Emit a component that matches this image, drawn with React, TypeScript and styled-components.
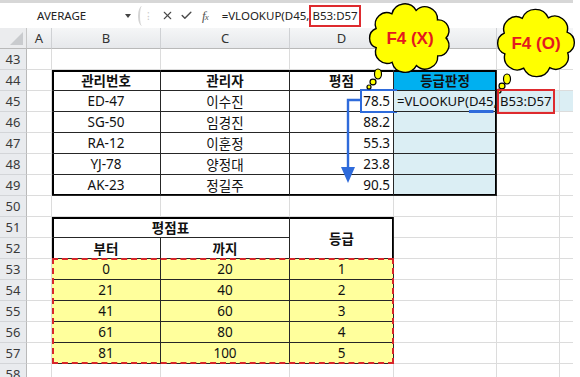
import React from 'react';
import styled, { createGlobalStyle } from 'styled-components';
import { X, Check } from 'lucide-react';

const GlobalStyle = createGlobalStyle`
  html, body {
    margin: 0;
    padding: 0;
    background: #fff;
  }
  body {
    font-family: "Noto Sans", "Noto Sans CJK KR", sans-serif;
    color: #111;
  }
`;

const COLS = '27px 25px 109px 129px 104px 103px 63px 13px';
const ROW_H = '21px';

const Page = styled.div`
  position: relative;
  width: 580px;
  height: 377px;
  overflow: hidden;
`;

const Window = styled.div`
  width: 573px;
`;

const FormulaBar = styled.div`
  display: flex;
  align-items: center;
  height: 28px;
  box-sizing: border-box;
  border-top: 3px solid #d7d7d7;
  background: #fff;
`;

const NameBox = styled.div`
  display: flex;
  align-items: center;
  justify-content: space-between;
  width: 136px;
  padding: 0 5px 0 37px;
  box-sizing: border-box;
  font-size: 11.5px;
  color: #222;
`;

const DropArrow = styled.span`
  width: 0;
  height: 0;
  border-left: 3px solid transparent;
  border-right: 3px solid transparent;
  border-top: 4px solid #444;
`;

const Bracket = styled.span`
  width: 6px;
  height: 20px;
  margin-left: 2px;
  border-left: 2px solid #d4d4d4;
  border-radius: 50% 0 0 50%;
`;

const Grip = styled.span`
  color: #c8c8c8;
  font-size: 10px;
  margin-left: 1px;
  width: 14px;
`;

const ToolIcons = styled.div`
  display: flex;
  align-items: center;
  gap: 6px;
  color: #4a4a4a;
`;

const Fx = styled.span`
  font-family: "Liberation Serif", serif;
  font-style: italic;
  font-size: 13px;
  color: #555;
  letter-spacing: -1px;
  margin-left: 3px;
  & > small {
    font-size: 9px;
  }
`;

const FormulaText = styled.div`
  flex: 1;
  display: flex;
  align-items: center;
  height: 100%;
  padding-left: 14px;
  font-size: 11.5px;
  color: #222;
  white-space: nowrap;
`;

const RangeBox = styled.span<{ $h: number }>`
  display: inline-flex;
  align-items: center;
  height: ${p => p.$h}px;
  box-sizing: border-box;
  border: 2px solid #de2a2e;
  padding: 0 1px;
`;

const SheetWrap = styled.div`
  position: relative;
`;

const Sheet = styled.div`
  display: grid;
  grid-template-columns: ${COLS};
  grid-auto-rows: ${ROW_H};
`;

const Layer = styled.div`
  position: absolute;
  inset: 0;
  display: grid;
  grid-template-columns: ${COLS};
  grid-auto-rows: ${ROW_H};
  pointer-events: none;
`;

const Marquee = styled.div`
  grid-column: 3 / 6;
  grid-row: 12 / 17;
  margin: -1px 0 0 0;
  border: 2px dashed #d8262a;
`;

const Corner = styled.div`
  position: relative;
  background: #ebecee;
  border-right: 1px solid #c6c6c6;
  border-bottom: 1px solid #b9b9b9;
  &::after {
    content: '';
    position: absolute;
    right: 3px;
    bottom: 3px;
    border-left: 13px solid transparent;
    border-bottom: 13px solid #c9cbce;
  }
`;

const ColHead = styled.div<{ $last?: boolean }>`
  display: flex;
  align-items: center;
  justify-content: center;
  background: linear-gradient(#f5f6f7, #e6e8eb);
  border-right: ${p => (p.$last ? 'none' : '1px solid #cfd1d4')};
  border-bottom: 1px solid #b9b9b9;
  font-size: 13px;
  color: #333;
`;

const RowHead = styled.div`
  display: flex;
  align-items: center;
  justify-content: center;
  background: #e9ebee;
  border-right: 1px solid #b9b9b9;
  border-bottom: 1px solid #d3d5d8;
  font-size: 13px;
  color: #3a3a3a;
`;

type Align = 'left' | 'center' | 'right';

const shadowFor = (edges = '') => {
  const parts: string[] = [];
  if (edges.includes('t')) parts.push('inset 0 2px 0 #000');
  if (edges.includes('l')) parts.push('inset 2px 0 0 #000');
  if (edges.includes('r')) parts.push('inset -1px 0 0 #000');
  if (edges.includes('b')) parts.push('inset 0 -1px 0 #000');
  return parts.length ? parts.join(', ') : 'none';
};

const Cell = styled.div<{
  $bg?: string;
  $align?: Align;
  $bold?: boolean;
  $dark?: boolean;
  $edges?: string;
  $span?: number;
  $rows?: number;
  $last?: boolean;
  $front?: boolean;
}>`
  position: relative;
  z-index: ${p => (p.$front ? 2 : 'auto')};
  display: flex;
  align-items: center;
  justify-content: ${p =>
    p.$align === 'right' ? 'flex-end' : p.$align === 'center' ? 'center' : 'flex-start'};
  padding: 0 3px;
  box-sizing: border-box;
  background: ${p => p.$bg ?? '#fff'};
  border-right: ${p => (p.$last ? 'none' : `1px solid ${p.$dark ? '#262626' : '#dcdcdc'}`)};
  border-bottom: 1px solid ${p => (p.$dark ? '#262626' : '#dcdcdc')};
  box-shadow: ${p => shadowFor(p.$edges)};
  grid-column: span ${p => p.$span ?? 1};
  grid-row: span ${p => p.$rows ?? 1};
  font-size: ${p => (p.$front ? '13.1px' : '13.5px')};
  font-weight: ${p => (p.$bold ? 700 : 400)};
  white-space: nowrap;
`;

const RefMark = styled.span`
  text-decoration: underline;
  text-decoration-color: #2f6bdb;
  text-decoration-thickness: 3px;
  text-underline-offset: 4px;
`;

const Annotations = styled.svg`
  position: absolute;
  left: 0;
  top: 0;
  pointer-events: none;
`;

const CloudLabel = styled.text`
  font-family: "Liberation Sans", sans-serif;
  font-weight: 700;
  font-size: 17px;
  fill: #e3191f;
`;

const BLUE = '#2f6bdb';
const LIGHT_BLUE = '#dbeef4';
const YELLOW = '#ffff9c';

const people = [
  ['ED-47', '이수진', '78.5'],
  ['SG-50', '임경진', '88.2'],
  ['RA-12', '이훈정', '55.3'],
  ['YJ-78', '양정대', '23.8'],
  ['AK-23', '정길주', '90.5'],
];

const grades = [
  ['0', '20', '1'],
  ['21', '40', '2'],
  ['41', '60', '3'],
  ['61', '80', '4'],
  ['81', '100', '5'],
];

const cloudPath = (cx: number, cy: number, rx: number, ry: number, n: number, tilt: number) => {
  const pts = Array.from({ length: n }, (_, i) => {
    const a = (i / n) * Math.PI * 2 + tilt;
    return [cx + rx * Math.cos(a), cy + ry * Math.sin(a)];
  });
  let d = `M${pts[0][0].toFixed(1)} ${pts[0][1].toFixed(1)}`;
  for (let i = 1; i <= n; i++) {
    const [x0, y0] = pts[i - 1];
    const [x, y] = pts[i % n];
    const r = Math.hypot(x - x0, y - y0) * 0.54;
    d += ` A${r.toFixed(1)} ${r.toFixed(1)} 0 0 1 ${x.toFixed(1)} ${y.toFixed(1)}`;
  }
  return d + 'Z';
};

const Cloud = ({ cx, cy, rx, ry, n, tilt, label, dots }: {
  cx: number; cy: number; rx: number; ry: number; n: number; tilt: number; label: string;
  dots: [number, number, number, number][];
}) => (
  <g>
    {dots.map(([x, y, a, b], i) => (
      <ellipse key={i} cx={x} cy={y} rx={a} ry={b} fill="#ffff00" stroke="#000" strokeWidth={1.2} />
    ))}
    <path d={cloudPath(cx, cy, rx, ry, n, tilt)} fill="#ffff00" stroke="#000" strokeWidth={1.4} />
    <CloudLabel x={cx} y={cy + 6} textAnchor="middle">{label}</CloudLabel>
  </g>
);

const Blanks = ({ n, bg, from = 0 }: { n: number; bg?: string; from?: number }) => (
  <>
    {Array.from({ length: n }, (_, i) => (
      <Cell key={i} $bg={bg} $last={from + i === 6} />
    ))}
  </>
);

const EmptyRow = ({ num }: { num: number }) => (
  <>
    <RowHead>{num}</RowHead>
    <Blanks n={7} />
  </>
);

export default function App() {
  return (
    <Page>
      <GlobalStyle />
      <Window>
        <FormulaBar>
          <NameBox>
            AVERAGE
            <DropArrow />
          </NameBox>
          <Bracket />
          <Grip>⁝</Grip>
          <ToolIcons>
            <X size={13} strokeWidth={2} />
            <Check size={13} strokeWidth={2.6} />
            <Fx>f<small>x</small></Fx>
          </ToolIcons>
          <FormulaText>
            =VLOOKUP(D45,<RangeBox $h={22}>B53:D57</RangeBox>
          </FormulaText>
        </FormulaBar>

        <SheetWrap>
          <Sheet>
            <Corner />
            {['A', 'B', 'C', 'D', 'E', 'F', ''].map((c, i) => (
              <ColHead key={i} $last={i === 6}>{c}</ColHead>
            ))}

            <EmptyRow num={43} />

            <RowHead>44</RowHead>
            <Cell />
            <Cell $align="center" $bold $dark $edges="tl">관리번호</Cell>
            <Cell $align="center" $bold $dark $edges="t">관리자</Cell>
            <Cell $align="center" $bold $dark $edges="t">평점</Cell>
            <Cell $align="center" $bold $dark $edges="tr" $bg="#00b0f0">등급판정</Cell>
            <Blanks n={2} from={5} />

            {people.map(([code, name, score], i) => {
              const last = i === people.length - 1;
              return (
                <React.Fragment key={code}>
                  <RowHead>{45 + i}</RowHead>
                  <Cell />
                  <Cell $align="center" $dark $edges={last ? 'lb' : 'l'}>{code}</Cell>
                  <Cell $align="center" $dark $edges={last ? 'b' : ''}>{name}</Cell>
                  <Cell $align="right" $dark $edges={last ? 'b' : ''}>{score}</Cell>
                  {i === 0 ? (
                    <Cell $dark $edges="r" $bg={LIGHT_BLUE} $front>
                      =VLOOKUP(<RefMark>D45</RefMark>,<RangeBox $h={25}>B53:D57</RangeBox>
                    </Cell>
                  ) : (
                    <Cell $dark $edges={last ? 'rb' : 'r'} $bg={LIGHT_BLUE} />
                  )}
                  <Blanks n={2} from={5} bg={i === 0 ? LIGHT_BLUE : undefined} />
                </React.Fragment>
              );
            })}

            <EmptyRow num={50} />

            <RowHead>51</RowHead>
            <Cell />
            <Cell $span={2} $align="center" $bold $dark $edges="tl">평점표</Cell>
            <Cell $rows={2} $align="center" $bold $dark $edges="tr">등급</Cell>
            <Blanks n={3} from={4} />

            <RowHead>52</RowHead>
            <Cell />
            <Cell $align="center" $bold $dark $edges="l">부터</Cell>
            <Cell $align="center" $bold $dark>까지</Cell>
            <Blanks n={3} from={4} />

            {grades.map(([from, to, grade], i) => (
              <React.Fragment key={from}>
                <RowHead>{53 + i}</RowHead>
                <Cell />
                <Cell $align="center" $dark $bg={YELLOW}>{from}</Cell>
                <Cell $align="center" $dark $bg={YELLOW}>{to}</Cell>
                <Cell $align="center" $dark $bg={YELLOW}>{grade}</Cell>
                <Blanks n={3} from={4} />
              </React.Fragment>
            ))}

            <EmptyRow num={58} />
          </Sheet>

          <Layer>
            <Marquee />
          </Layer>
        </SheetWrap>
      </Window>

      <Annotations width={580} height={377} viewBox="0 0 580 377">
        <rect x={361} y={90} width={35} height={22} fill="none" stroke={BLUE} strokeWidth={2} />
        <path d="M361 100 H348 V170" fill="none" stroke={BLUE} strokeWidth={2.4} />
        <polygon points="341,167 355,167 348,183" fill={BLUE} />
        <Cloud
          cx={410} cy={38} rx={36} ry={28} n={9} tilt={-1.4} label="F4 (X)"
          dots={[[378, 74, 3.5, 5], [373, 82, 3, 2.8], [369, 87, 2, 2]]}
        />
        <Cloud
          cx={536} cy={43} rx={34} ry={27} n={8} tilt={-1.2} label="F4 (O)"
          dots={[[507, 79, 3.5, 5], [502, 86, 3, 2.8], [499, 91, 2, 2]]}
        />
      </Annotations>
    </Page>
  );
}
